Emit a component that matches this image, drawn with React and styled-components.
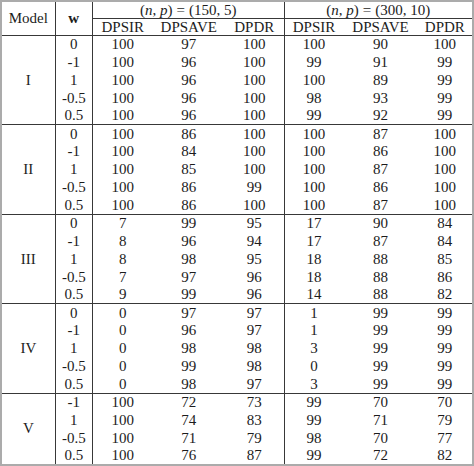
import React from "react";
import styled, { createGlobalStyle } from "styled-components";

const Global = createGlobalStyle`
  html, body { margin: 0; padding: 0; background: #ffffff; }
  #root { width: 474px; height: 466px; }
`;

const Table = styled.table`
  border-collapse: collapse;
  table-layout: fixed;
  width: 474px;
  height: 466px;
  border: 2px solid #ababab;
  font-family: "Liberation Serif", "Times New Roman", serif;
  font-size: 15px;
  color: #1c1c1c;
`;

const Col = styled.col`
  width: ${(p) => p.$w}px;
`;

const HeadRow = styled.tr`
  height: ${(p) => p.$h}px;
`;

const HeadCell = styled.th`
  font-weight: normal;
  padding: 0;
  text-align: center;
  vertical-align: middle;
  line-height: 1;
  border-right: ${(p) => (p.$rule ? "1px solid #383838" : "none")};
  border-bottom: ${(p) => (p.$under ? "1px solid #383838" : "none")};
`;

const Group = styled.tbody`
  border-top: 1px solid #383838;
`;

const DataRow = styled.tr`
  height: 17.6px;
`;

const Cell = styled.td`
  padding: 0;
  text-align: center;
  vertical-align: middle;
  line-height: 1;
  border-right: ${(p) => (p.$rule ? "1px solid #383838" : "none")};
`;

const Bold = styled.span`
  font-weight: bold;
`;

const Var = styled.i`
  font-style: italic;
`;

const Eq = styled.span`
  padding: 0 4px;
`;

const groups = [
  {
    name: "I",
    rows: [
      ["0", 100, 97, 100, 100, 90, 100],
      ["-1", 100, 96, 100, 99, 91, 99],
      ["1", 100, 96, 100, 100, 89, 99],
      ["-0.5", 100, 96, 100, 98, 93, 99],
      ["0.5", 100, 96, 100, 99, 92, 99],
    ],
  },
  {
    name: "II",
    rows: [
      ["0", 100, 86, 100, 100, 87, 100],
      ["-1", 100, 84, 100, 100, 86, 100],
      ["1", 100, 85, 100, 100, 87, 100],
      ["-0.5", 100, 86, 99, 100, 86, 100],
      ["0.5", 100, 86, 100, 100, 87, 100],
    ],
  },
  {
    name: "III",
    rows: [
      ["0", 7, 99, 95, 17, 90, 84],
      ["-1", 8, 96, 94, 17, 87, 84],
      ["1", 8, 98, 95, 18, 88, 85],
      ["-0.5", 7, 97, 96, 18, 88, 86],
      ["0.5", 9, 99, 96, 14, 88, 82],
    ],
  },
  {
    name: "IV",
    rows: [
      ["0", 0, 97, 97, 1, 99, 99],
      ["-1", 0, 96, 97, 1, 99, 99],
      ["1", 0, 98, 98, 3, 99, 99],
      ["-0.5", 0, 99, 98, 0, 99, 99],
      ["0.5", 0, 98, 97, 3, 99, 99],
    ],
  },
  {
    name: "V",
    rows: [
      ["-1", 100, 72, 73, 99, 70, 70],
      ["1", 100, 74, 83, 99, 71, 79],
      ["-0.5", 100, 71, 79, 98, 70, 77],
      ["0.5", 100, 76, 87, 99, 72, 82],
    ],
  },
];

const widths = [54, 37, 60, 72, 59, 59, 74, 55];
const methods = ["DPSIR", "DPSAVE", "DPDR"];

function NP({ n, p }) {
  return (
    <>
      (<Var>n</Var>, <Var>p</Var>)<Eq>=</Eq>({n}, {p})
    </>
  );
}

export default function App() {
  return (
    <>
      <Global />
      <Table>
        <colgroup>
          {widths.map((w, i) => (
            <Col key={i} $w={w} />
          ))}
        </colgroup>
        <thead>
          <HeadRow $h={17.5}>
            <HeadCell rowSpan={2} $rule>
              Model
            </HeadCell>
            <HeadCell rowSpan={2} $rule>
              <Bold>w</Bold>
            </HeadCell>
            <HeadCell colSpan={3} $rule $under>
              <NP n="150" p="5" />
            </HeadCell>
            <HeadCell colSpan={3} $under>
              <NP n="300" p="10" />
            </HeadCell>
          </HeadRow>
          <HeadRow $h={17}>
            {methods.map((m, i) => (
              <HeadCell key={"a" + m} $rule={i === 2}>
                {m}
              </HeadCell>
            ))}
            {methods.map((m) => (
              <HeadCell key={"b" + m}>{m}</HeadCell>
            ))}
          </HeadRow>
        </thead>
        {groups.map((g) => (
          <Group key={g.name}>
            {g.rows.map((r, ri) => (
              <DataRow key={ri}>
                {ri === 0 && (
                  <Cell rowSpan={g.rows.length} $rule>
                    {g.name}
                  </Cell>
                )}
                <Cell $rule>{r[0]}</Cell>
                {r.slice(1).map((v, ci) => (
                  <Cell key={ci} $rule={ci === 2}>
                    {v}
                  </Cell>
                ))}
              </DataRow>
            ))}
          </Group>
        ))}
      </Table>
    </>
  );
}
